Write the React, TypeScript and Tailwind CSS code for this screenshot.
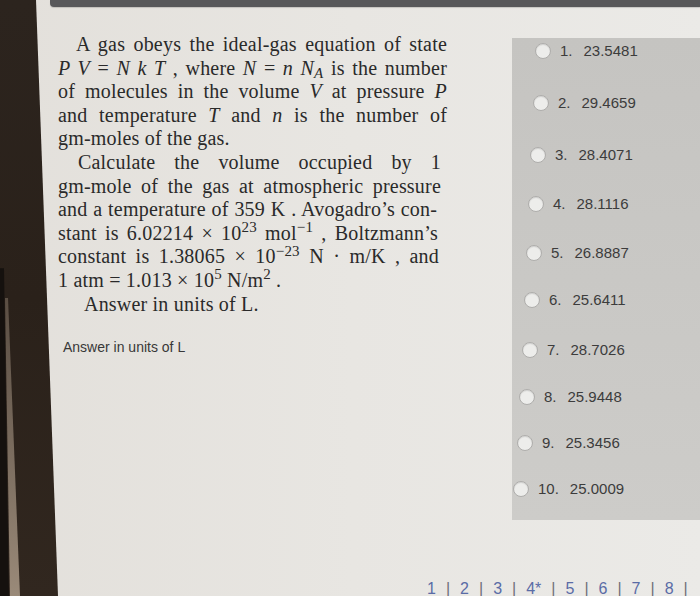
import React from 'react';

type Option = { n: number; value: string; pos: string };

const options: Option[] = [
  { n: 1, value: '23.5481', pos: 'mt-0 ml-[23px]' },
  { n: 2, value: '29.4659', pos: 'mt-[26px] ml-[21px]' },
  { n: 3, value: '28.4071', pos: 'mt-[26px] ml-[18px]' },
  { n: 4, value: '28.1116', pos: 'mt-[23px] ml-[16px]' },
  { n: 5, value: '26.8887', pos: 'mt-[23px] ml-[14px]' },
  { n: 6, value: '25.6411', pos: 'mt-[21px] ml-[12px]' },
  { n: 7, value: '28.7026', pos: 'mt-[24px] ml-[10px]' },
  { n: 8, value: '25.9448', pos: 'mt-[21px] ml-[7px]' },
  { n: 9, value: '25.3456', pos: 'mt-[20px] ml-[5px]' },
  { n: 10, value: '25.0009', pos: 'mt-[20px] ml-[1px]' },
];

const pages = ['1', '2', '3', '4*', '5', '6', '7', '8'];

const J = 'text-justify [text-align-last:justify]';

const Bezel: React.FC = () => (
  <div className="w-[58px] shrink-0 relative">
    <div className="absolute inset-0 bg-gradient-to-b from-[#2c241e] via-[#2a211a] to-[#31271f] [clip-path:polygon(0_0,36px_0,58px_100%,0_100%)]" />
    <div className="absolute inset-0 bg-gradient-to-b from-[#2c241e] via-[#5a4e43] to-[#9a8a79] [clip-path:polygon(5px_50%,8px_50%,20px_100%,10px_100%)]" />
    <div className="absolute inset-0 bg-[#15110e] [clip-path:polygon(0_45%,4px_45%,9px_100%,0_100%)]" />
  </div>
);

const Question: React.FC = () => (
  <div className="w-[389px] shrink-0 pt-[26px] font-['Liberation_Serif',serif] text-[20px] leading-[23.6px] tracking-[0.2px] text-[#2a2a2a]">
    <div className={`${J} pl-[18px]`}>A gas obeys the ideal-gas equation of state</div>
    <div className={J}>
      <i>P V</i> = <i>N k T</i> , where <i>N</i> = <i>n N<sub>A</sub></i> is the number
    </div>
    <div className={J}>
      of molecules in the volume <i>V</i> at pressure <i>P</i>
    </div>
    <div className={J}>
      and temperature <i>T</i> and <i>n</i> is the number of
    </div>
    <div>gm-moles of the gas.</div>
    <div className={`${J} pl-[20px] pr-[6px]`}>Calculate the volume occupied by 1</div>
    <div className={`${J} pr-[6px]`}>gm-mole of the gas at atmospheric pressure</div>
    <div className={`${J} pr-[10px]`}>and a temperature of 359 K . Avogadro’s con-</div>
    <div className={`${J} pr-[9px]`}>
      stant is 6.02214 × 10<sup>23</sup> mol<sup>−1</sup> , Boltzmann’s
    </div>
    <div className={`${J} pr-[8px]`}>
      constant is 1.38065 × 10<sup>−23</sup> N · m/K , and
    </div>
    <div>
      1 atm = 1.013 × 10<sup>5</sup> N/m<sup>2</sup> .
    </div>
    <div className="pl-[26px]">Answer in units of L.</div>
    <div className="mt-[21px] ml-[5px] font-['Liberation_Sans',sans-serif] text-[14px] leading-[20px] tracking-normal text-[#383838]">
      Answer in units of L
    </div>
  </div>
);

const Choices: React.FC = () => (
  <div className="ml-[65px] flex-1 mt-[31px] h-[482px] bg-gradient-to-b from-[#c5c4c1] to-[#cdccc9] flex flex-col font-['Liberation_Sans',sans-serif] text-[15px] text-[#3c3c3c]">
    {options.map((o) => (
      <label key={o.n} className={`${o.pos} h-[26px] flex items-center gap-[9px] shrink-0`}>
        <span className="w-[16px] h-[16px] rounded-full bg-[#ededeb] border border-[#aeadab] shadow-[inset_0_1px_1px_rgba(0,0,0,0.12)]" />
        <span>{o.n}.</span>
        <span className="ml-[2px]">{o.value}</span>
      </label>
    ))}
  </div>
);

const Pager: React.FC = () => (
  <div className="mt-auto -mb-[3px] pl-[369px] h-[20px] flex items-center gap-[10px] font-['Liberation_Sans',sans-serif] text-[16px] leading-[20px]">
    {pages.map((p) => (
      <React.Fragment key={p}>
        <span className="text-[#5a6ca6]">{p}</span>
        <span className="text-[#6f6f78]">|</span>
      </React.Fragment>
    ))}
  </div>
);

export default function App() {
  return (
    <div className="w-[700px] h-[596px] overflow-hidden flex bg-gradient-to-r from-[#e3e0db] via-[#e8e6e2] to-[#ebeae7]">
      <Bezel />
      <div className="flex-1 min-w-0 flex flex-col">
        <div className="h-[7px] -ml-[8px] shrink-0 bg-[#58585a] rounded-bl-[4px] shadow-[0_1px_1px_rgba(0,0,0,0.15)]" />
        <div className="flex">
          <Question />
          <Choices />
        </div>
        <Pager />
      </div>
    </div>
  );
}
